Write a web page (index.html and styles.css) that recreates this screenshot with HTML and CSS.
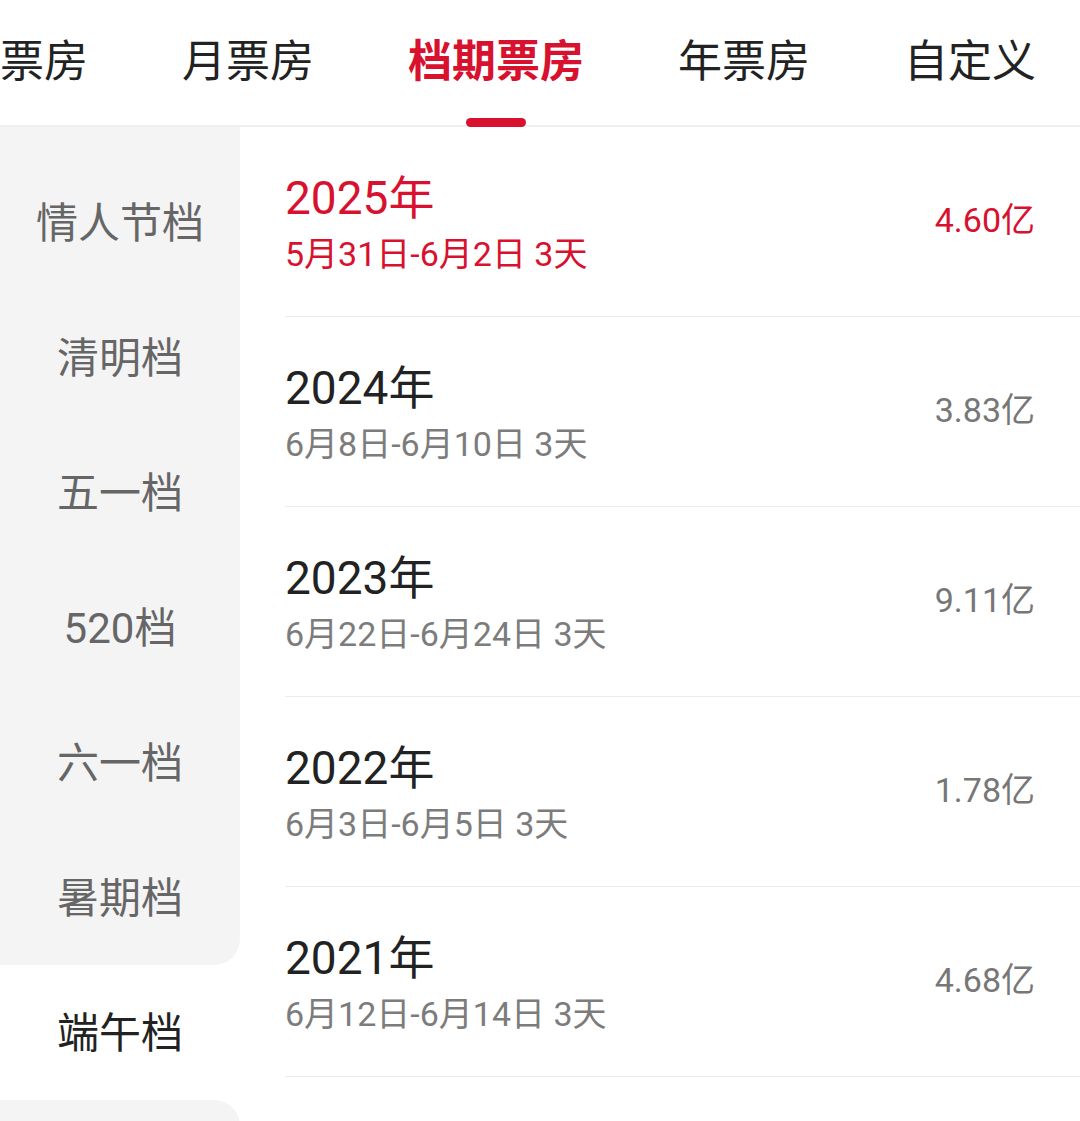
FILE: index.html
```html
<!DOCTYPE html>
<html lang="zh-CN">
<head>
  <meta charset="UTF-8">
  <meta name="viewport" content="width=device-width, initial-scale=1.0">
  <title>档期票房</title>
  <link rel="stylesheet" href="styles.css">
</head>
<body>
  <div class="tabs">
    <div class="tab">票房</div>
    <div class="tab">月票房</div>
    <div class="tab active">档期票房</div>
    <div class="tab">年票房</div>
    <div class="tab">自定义</div>
  </div>

  <div class="main">
    <div class="sidebar">
      <div class="side-pad"></div>
      <div class="side-item">情人节档</div>
      <div class="side-item">清明档</div>
      <div class="side-item">五一档</div>
      <div class="side-item">520档</div>
      <div class="side-item">六一档</div>
      <div class="side-item before-active">暑期档</div>
      <div class="side-item active">端午档</div>
      <div class="side-item after-active"></div>
    </div>

    <div class="list">
      <div class="row current">
        <div class="info">
          <div class="year">2025年</div>
          <div class="dates">5月31日-6月2日 3天</div>
        </div>
        <div class="amount">4.60亿</div>
      </div>
      <div class="row">
        <div class="info">
          <div class="year">2024年</div>
          <div class="dates">6月8日-6月10日 3天</div>
        </div>
        <div class="amount">3.83亿</div>
      </div>
      <div class="row">
        <div class="info">
          <div class="year">2023年</div>
          <div class="dates">6月22日-6月24日 3天</div>
        </div>
        <div class="amount">9.11亿</div>
      </div>
      <div class="row">
        <div class="info">
          <div class="year">2022年</div>
          <div class="dates">6月3日-6月5日 3天</div>
        </div>
        <div class="amount">1.78亿</div>
      </div>
      <div class="row">
        <div class="info">
          <div class="year">2021年</div>
          <div class="dates">6月12日-6月14日 3天</div>
        </div>
        <div class="amount">4.68亿</div>
      </div>
    </div>
  </div>
</body>
</html>
```

FILE: styles.css
```css
body {
  margin: 0;
  padding: 0;
  background: #fff;
  font-family: Roboto, "Noto Sans CJK SC", sans-serif;
  color: #222;
  width: 1080px;
  height: 1121px;
  overflow: hidden;
}
.tabs {
  display: flex;
  gap: 94px;
  height: 125px;
  border-bottom: 2px solid #efefef;
  white-space: nowrap;
}
.tab {
  position: relative;
  font-family: "Noto Sans CJK SC", sans-serif;
  font-size: 44px;
  line-height: 44px;
  padding-top: 36px;
  color: #222;
}
.tab.active {
  color: #d8112f;
  font-weight: bold;
}
.tab.active::after {
  content: "";
  position: absolute;
  left: 50%;
  bottom: -2px;
  width: 60px;
  height: 9px;
  margin-left: -30px;
  border-radius: 5px;
  background: #d8112f;
}
.main {
  display: flex;
}
.sidebar {
  width: 240px;
  flex-shrink: 0;
  background: #fff;
}
.side-pad {
  height: 28px;
  background: #f4f4f4;
}
.side-item {
  height: 135px;
  box-sizing: border-box;
  padding-bottom: 7px;
  display: flex;
  align-items: center;
  justify-content: center;
  background: #f4f4f4;
  font-size: 42px;
  color: #666;
}
.side-item.active {
  background: #fff;
  color: #222;
}
.side-item.before-active {
  border-bottom-right-radius: 26px;
}
.side-item.after-active {
  border-top-right-radius: 26px;
}
.list {
  flex: 1;
}
.row {
  height: 189px;
  margin-left: 45px;
  padding-right: 45px;
  border-bottom: 1px solid #ececec;
  display: flex;
  align-items: center;
  justify-content: space-between;
}
.info {
  padding-top: 2px;
}
.year {
  font-size: 46px;
  line-height: 52px;
  color: #222;
}
.dates {
  margin-top: 10px;
  font-size: 34px;
  line-height: 40px;
  color: #7c7c7c;
}
.amount {
  padding-bottom: 8px;
  font-size: 34px;
  color: #777;
}
.row.current .year,
.row.current .dates,
.row.current .amount {
  color: #d8112f;
}
```
